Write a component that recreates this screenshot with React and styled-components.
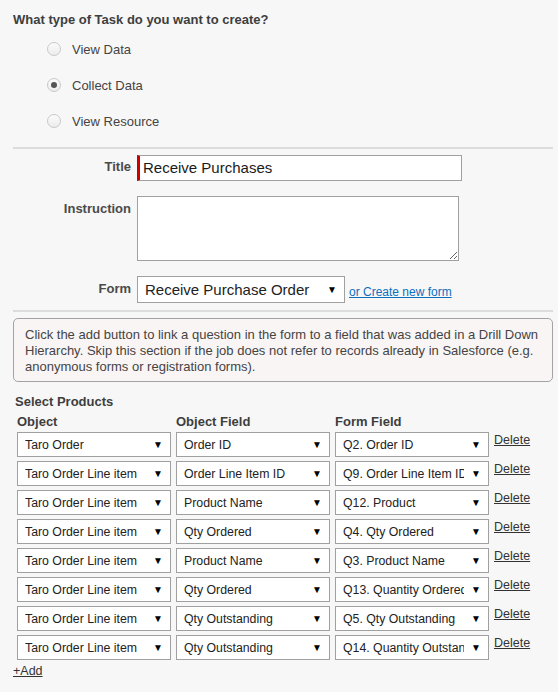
import React from "react";
import styled, { createGlobalStyle } from "styled-components";

const GlobalStyle = createGlobalStyle`
  html, body {
    margin: 0;
    padding: 0;
    background: #f7f7f7;
  }
  body {
    font-family: "Liberation Sans", Arial, sans-serif;
    color: #3e3e3e;
  }
`;

const Page = styled.div`
  width: 540px;
  padding: 12px 5px 14px 13px;
  background: #f7f7f7;
`;

const Heading = styled.div`
  font-size: 13px;
  font-weight: bold;
  line-height: 15px;
  color: #3e3e3e;
`;

const RadioList = styled.div`
  display: flex;
  flex-direction: column;
  padding: 4px 0 0 34px;
`;

const RadioRow = styled.label`
  display: flex;
  align-items: center;
  gap: 11px;
  height: 36px;
  font-size: 13px;
  color: #444;
`;

const RadioDot = styled.span`
  width: 12px;
  height: 12px;
  border-radius: 50%;
  border: 1px solid #c9c9c9;
  background: linear-gradient(#fbfbfb, #ececec);
  display: flex;
  align-items: center;
  justify-content: center;
  flex: none;
  &::after {
    content: "";
    width: 6px;
    height: 6px;
    border-radius: 50%;
    background: ${(p) => (p.$checked ? "#555" : "transparent")};
  }
`;

const Divider = styled.div`
  height: 2px;
  background: #dcdcdc;
  margin: ${(p) => p.$margin};
`;

const FieldGrid = styled.div`
  display: grid;
  grid-template-columns: 118px auto;
  column-gap: 6px;
  row-gap: 15px;
  padding: 6px 0 7px 0;
  align-items: start;
`;

const FieldLabel = styled.div`
  font-size: 13px;
  font-weight: bold;
  color: #4a4a4a;
  text-align: right;
  padding-top: ${(p) => p.$top || "4px"};
`;

const TitleInput = styled.div`
  width: 318px;
  height: 24px;
  border: 1px solid #a0a0a0;
  border-left: 3px solid #c00;
  background: #fff;
  font-size: 15px;
  color: #1a1a1a;
  line-height: 24px;
  padding-left: 3px;
  box-sizing: content-box;
`;

const TextArea = styled.textarea`
  width: 316px;
  height: 59px;
  border: 1px solid #a0a0a0;
  background: #fff;
  margin: 0;
  padding: 2px;
  display: block;
  resize: both;
  font-family: inherit;
`;

const FormRow = styled.div`
  display: flex;
  align-items: flex-end;
  gap: 4px;
`;

const Select = styled.div`
  display: flex;
  align-items: center;
  width: ${(p) => p.$width}px;
  height: ${(p) => p.$height}px;
  box-sizing: border-box;
  border: 1px solid #a0a0a0;
  background: #fff;
  font-size: ${(p) => p.$size}px;
  color: #222;
  padding-left: 7px;
`;

const SelectText = styled.span`
  flex: 1;
  overflow: hidden;
  white-space: nowrap;
`;

const Arrow = styled.span`
  width: 24px;
  flex: none;
  text-align: center;
  font-size: 10px;
  color: #000;
`;

const Link = styled.a`
  font-size: 12px;
  color: #0b6fc0;
  text-decoration: underline;
  padding-bottom: 4px;
`;

const InfoBox = styled.div`
  border: 1px solid #a3a3a3;
  border-radius: 5px;
  background: #f9f5f5;
  padding: 8px 10px 6px 11px;
  font-size: 13px;
  line-height: 16px;
  color: #444;
  margin-top: 6px;
`;

const SectionTitle = styled.div`
  font-size: 13px;
  font-weight: bold;
  color: #3e3e3e;
  margin: 12px 0 0 2px;
  line-height: 15px;
`;

const Table = styled.div`
  display: grid;
  grid-template-columns: 154px 154px 154px auto;
  column-gap: 5px;
  row-gap: 4px;
  margin: 5px 0 0 4px;
`;

const ColHead = styled.div`
  font-size: 13px;
  font-weight: bold;
  color: #3e3e3e;
  line-height: 15px;
  margin-bottom: -1px;
`;

const DeleteLink = styled.a`
  font-size: 12.5px;
  color: #333;
  text-decoration: underline;
  padding-top: 1px;
`;

const AddLink = styled.a`
  display: inline-block;
  font-size: 12.5px;
  color: #333;
  text-decoration: underline;
  margin-top: 4px;
`;

const rows = [
  ["Taro Order", "Order ID", "Q2. Order ID"],
  ["Taro Order Line item", "Order Line Item ID", "Q9. Order Line Item ID"],
  ["Taro Order Line item", "Product Name", "Q12. Product"],
  ["Taro Order Line item", "Qty Ordered", "Q4. Qty Ordered"],
  ["Taro Order Line item", "Product Name", "Q3. Product Name"],
  ["Taro Order Line item", "Qty Ordered", "Q13. Quantity Ordered"],
  ["Taro Order Line item", "Qty Outstanding", "Q5. Qty Outstanding"],
  ["Taro Order Line item", "Qty Outstanding", "Q14. Quantity Outstanding"],
];

const Drop = ({ children, width = 154, height = 25, size = 12.3 }) => (
  <Select $width={width} $height={height} $size={size}>
    <SelectText>{children}</SelectText>
    <Arrow>▼</Arrow>
  </Select>
);

export default function App() {
  return (
    <Page>
      <GlobalStyle />
      <Heading>What type of Task do you want to create?</Heading>
      <RadioList>
        <RadioRow>
          <RadioDot />
          View Data
        </RadioRow>
        <RadioRow>
          <RadioDot $checked />
          Collect Data
        </RadioRow>
        <RadioRow>
          <RadioDot />
          View Resource
        </RadioRow>
      </RadioList>
      <Divider $margin="8px 0 0 0" />
      <FieldGrid>
        <FieldLabel>Title</FieldLabel>
        <TitleInput>Receive Purchases</TitleInput>
        <FieldLabel $top="5px">Instruction</FieldLabel>
        <TextArea />
        <FieldLabel $top="5px">Form</FieldLabel>
        <FormRow>
          <Drop width={208} height={27} size={15}>
            Receive Purchase Order
          </Drop>
          <Link href="#">or Create new form</Link>
        </FormRow>
      </FieldGrid>
      <Divider $margin="0" />
      <InfoBox>
        Click the add button to link a question in the form to a field that was
        added in a Drill Down Hierarchy. Skip this section if the job does not
        refer to records already in Salesforce (e.g. anonymous forms or
        registration forms).
      </InfoBox>
      <SectionTitle>Select Products</SectionTitle>
      <Table>
        <ColHead>Object</ColHead>
        <ColHead>Object Field</ColHead>
        <ColHead>Form Field</ColHead>
        <span />
        {rows.map((r, i) => (
          <React.Fragment key={i}>
            <Drop>{r[0]}</Drop>
            <Drop>{r[1]}</Drop>
            <Drop>{r[2]}</Drop>
            <DeleteLink href="#">Delete</DeleteLink>
          </React.Fragment>
        ))}
      </Table>
      <AddLink href="#">+Add</AddLink>
    </Page>
  );
}
